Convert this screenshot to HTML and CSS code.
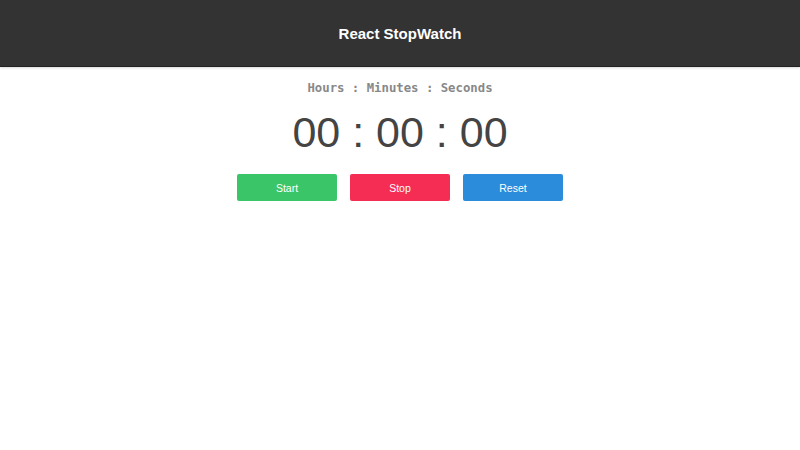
FILE: index.html
```html
<!DOCTYPE html>
<html>
<head>
  <meta charset="UTF-8">
  <title>React StopWatch</title>
  <link rel="stylesheet" href="styles.css">
</head>
<body>
  <header class="app-header">
    <h1>React StopWatch</h1>
  </header>

  <main class="stopwatch">
    <div class="labels">Hours : Minutes : Seconds</div>
    <div class="time">
      <span id="hours">00</span> : <span id="minutes">00</span> : <span id="seconds">00</span>
    </div>
    <div class="controls">
      <button class="btn btn-start" id="start">Start</button>
      <button class="btn btn-stop" id="stop">Stop</button>
      <button class="btn btn-reset" id="reset">Reset</button>
    </div>
  </main>
</body>
</html>
```

FILE: styles.css
```css
body {
  font-family: "Liberation Sans", Arial, Helvetica, sans-serif;
  margin: 0;
  background-color: #fff;
  color: #333;
}
.app-header {
  height: 66px;
  background-color: #333;
  border-bottom: 1px solid #222;
  box-shadow: 0 1px 2px rgba(0, 0, 0, 0.15);
  display: flex;
  align-items: center;
  justify-content: center;
}
.app-header h1 {
  margin: 0;
  color: #fff;
  font-size: 15px;
  font-weight: bold;
}
.stopwatch {
  display: flex;
  flex-direction: column;
  align-items: center;
}
.labels {
  margin-top: 14px;
  font-family: "DejaVu Sans Mono", monospace;
  font-weight: bold;
  font-size: 12.3px;
  color: #888;
}
.time {
  margin-top: 13px;
  font-size: 43px;
  line-height: 48px;
  color: #444;
}
.controls {
  display: flex;
  gap: 13px;
  margin-top: 18px;
}
.btn {
  width: 100px;
  height: 27px;
  border: none;
  border-radius: 2px;
  font-family: "Liberation Sans", Arial, sans-serif;
  font-size: 10.5px;
  color: #fff;
  cursor: pointer;
}
.btn-start {
  background-color: #3ac569;
}
.btn-stop {
  background-color: #f52d54;
}
.btn-reset {
  background-color: #2b8cdb;
}
```
